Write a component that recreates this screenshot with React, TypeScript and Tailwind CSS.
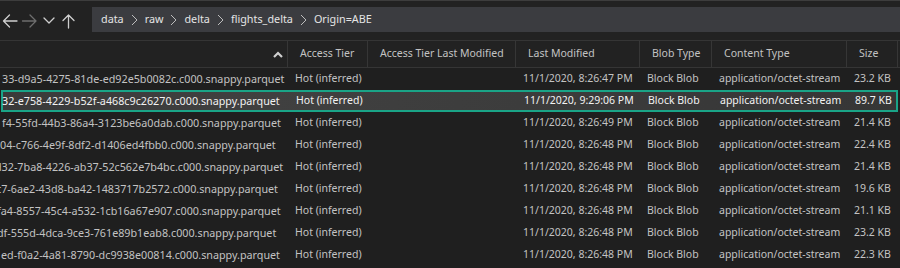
import type { ReactNode } from "react";

const GRID = "grid grid-cols-[287px_80px_148px_124px_72px_135px_51px_3px]";

interface BlobRow {
	name: string;
	shift: number;
	modified: string;
	size: string;
	selected?: boolean;
}

const rows: Array<BlobRow> = [
	{ name: "33-d9a5-4275-81de-ed92e5b0082c.c000.snappy.parquet", shift: 2, modified: "11/1/2020, 8:26:47 PM", size: "23.2 KB" },
	{ name: "32-e758-4229-b52f-a468c9c26270.c000.snappy.parquet", shift: 1, modified: "11/1/2020, 9:29:06 PM", size: "89.7 KB", selected: true },
	{ name: "f4-55fd-44b3-86a4-3123be6a0dab.c000.snappy.parquet", shift: 2, modified: "11/1/2020, 8:26:49 PM", size: "21.4 KB" },
	{ name: "04-c766-4e9f-8df2-d1406ed4fbb0.c000.snappy.parquet", shift: 0, modified: "11/1/2020, 8:26:48 PM", size: "22.4 KB" },
	{ name: "d32-7ba8-4226-ab37-52c562e7b4bc.c000.snappy.parquet", shift: -5, modified: "11/1/2020, 8:26:48 PM", size: "21.4 KB" },
	{ name: "c7-6ae2-43d8-ba42-1483717b2572.c000.snappy.parquet", shift: -4, modified: "11/1/2020, 8:26:48 PM", size: "19.6 KB" },
	{ name: "fa4-8557-45c4-a532-1cb16a67e907.c000.snappy.parquet", shift: -3, modified: "11/1/2020, 8:26:48 PM", size: "21.1 KB" },
	{ name: "df-555d-4dca-9ce3-761e89b1eab8.c000.snappy.parquet", shift: -3, modified: "11/1/2020, 8:26:48 PM", size: "23.2 KB" },
	{ name: "ed-f0a2-4a81-8790-dc9938e00814.c000.snappy.parquet", shift: 1, modified: "11/1/2020, 8:26:48 PM", size: "22.3 KB" },
];

const crumbs = ["data", "raw", "delta", "flights_delta", "Origin=ABE"];

function Chevron() {
	return (
		<svg width="7" height="12" viewBox="0 0 7 12" className="shrink-0">
			<path d="M1 1 L6 6 L1 11" fill="none" stroke="#bdbdbd" strokeWidth="1" />
		</svg>
	);
}

function NavIcons() {
	return (
		<div className="flex items-center h-full">
			<svg width="90" height="38" viewBox="0 0 90 38">
				<g fill="none" strokeWidth="1.3" strokeLinecap="round" strokeLinejoin="round">
					<path d="M3.5 19 H17 M3.5 19 L9.5 13 M3.5 19 L9.5 25" stroke="#cfcfcf" />
					<path d="M22.5 19 H36 M36 19 L30 13 M36 19 L30 25" stroke="#6e6e6e" />
					<path d="M44 16 L49 21 L54 16" stroke="#cfcfcf" />
					<path d="M68.5 13 V26 M68.5 13 L63 18.5 M68.5 13 L74 18.5" stroke="#cfcfcf" />
				</g>
			</svg>
		</div>
	);
}

function HeaderCell({ children, first }: { children?: ReactNode; first?: boolean }) {
	return (
		<div
			className={
				first
					? "flex items-center justify-end pr-[4px]"
					: "flex items-center border-l border-[#363636] pl-[12px] whitespace-nowrap overflow-hidden"
			}
		>
			{children}
		</div>
	);
}

export default function App() {
	return (
		<div className="w-[900px] h-[268px] overflow-hidden bg-[#1f1f1f] border-t border-[#3d3d3d] font-['Noto_Sans',sans-serif] text-[10.5px] text-[#c3c3c3]">
			<div className="flex h-[39px] bg-[#222222]">
				<NavIcons />
				<div className="ml-[2px] mt-[6px] flex h-[25px] flex-1 items-center gap-[7px] bg-[#3b3c40] pl-[9px] text-[10.8px] text-[#e4e4e4]">
					{crumbs.map((crumb, index) => (
						<div key={crumb} className="flex items-center gap-[7px]">
							{index > 0 && <Chevron />}
							<span>{crumb}</span>
						</div>
					))}
				</div>
			</div>

			<div className={`${GRID} h-[28px] border-y border-[#353535] bg-[#222222]`}>
				<HeaderCell first>
					<svg width="10" height="7" viewBox="0 0 10 7">
						<path d="M1 6 L5 2 L9 6" fill="none" stroke="#d0d0d0" strokeWidth="2.2" />
					</svg>
				</HeaderCell>
				<HeaderCell>Access Tier</HeaderCell>
				<HeaderCell>Access Tier Last Modified</HeaderCell>
				<HeaderCell>Last Modified</HeaderCell>
				<HeaderCell>Blob Type</HeaderCell>
				<HeaderCell>Content Type</HeaderCell>
				<HeaderCell>Size</HeaderCell>
				<HeaderCell />
			</div>

			<div className="flex flex-col">
				{rows.map((row) => (
					<div
						key={row.name}
						className={
							row.selected
								? `${GRID} h-[22px] items-center bg-[linear-gradient(to_right,#3a3a3a,#404040_30%,#363636)] text-[#f2f2f2] shadow-[inset_0_0_0_2px_#1aa487] mr-[2px] ml-[1px]`
								: `${GRID} h-[22px] items-center`
						}
					>
						<div className="overflow-hidden whitespace-nowrap text-[10.75px]">
							<span className="inline-block" style={{ marginLeft: row.shift }}>
								{row.name}
							</span>
						</div>
						<div className="pl-[8px] whitespace-nowrap">Hot (inferred)</div>
						<div />
						<div className="pl-[8px] whitespace-nowrap">{row.modified}</div>
						<div className="pl-[8px] whitespace-nowrap">Block Blob</div>
						<div className="pl-[8px] whitespace-nowrap">application/octet-stream</div>
						<div className="pl-[8px] whitespace-nowrap">{row.size}</div>
						<div />
					</div>
				))}
			</div>
		</div>
	);
}
